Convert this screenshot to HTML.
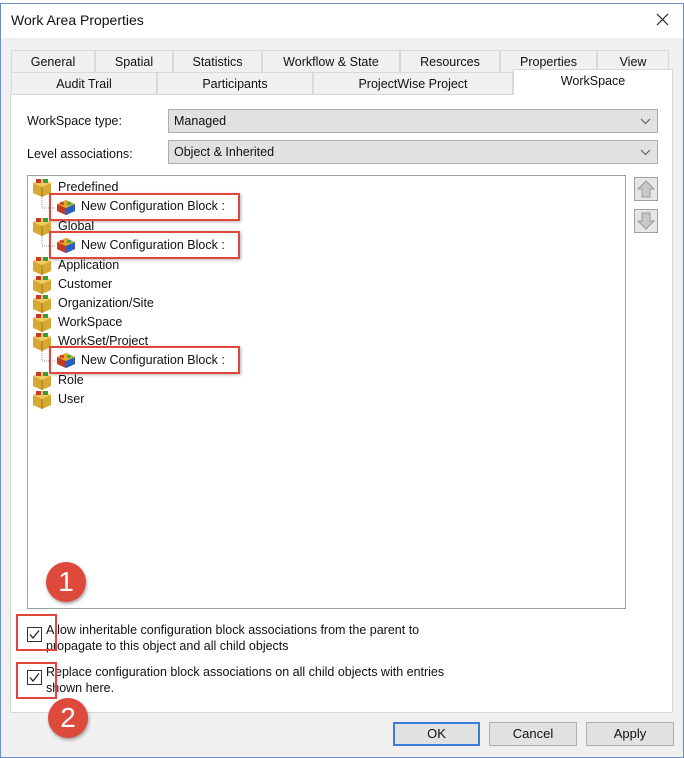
<!DOCTYPE html>
<html><head><style>
*{margin:0;padding:0;box-sizing:border-box}
body{width:684px;height:758px;background:#fff;font-family:"Liberation Sans",sans-serif;font-size:12.5px;color:#111;position:relative;overflow:hidden}
.a{position:absolute}
.dlg{left:0;top:3px;width:684px;height:755px;border:1px solid #6a8fc8;background:#f0f0f0}
.title{left:1px;top:4px;width:682px;height:34px;background:#fff}
.tab{position:absolute;height:22px;border:1px solid #d9d9d9;border-bottom:none;background:#f0f0f0;text-align:center;line-height:22px;font-size:12.5px}
.panel{left:10px;top:94px;width:663px;height:619px;background:#fff;border:1px solid #d9d9d9}
.sel{position:absolute;left:168px;width:490px;height:24px;background:#e1e1e1;border:1px solid #adadad;padding-left:5px;line-height:22px}
.sel svg{position:absolute;right:6px;top:8px}
.tree{left:27px;top:175px;width:599px;height:434px;border:1px solid #a0a0a0;background:#fff}
.row{position:absolute;height:19px;line-height:19px;white-space:nowrap}
.red{position:absolute;border:2px solid #e0463a;box-shadow:1px 1px 3px rgba(0,0,0,.3)}
.btn{position:absolute;top:722px;height:24px;background:#e1e1e1;border:1px solid #adadad;text-align:center;line-height:22px;font-size:13px}
.arrow{position:absolute;left:634px;width:24px;height:24px;border:1px solid #a0a0a0;background:#e6e6e6}
.cb{position:absolute;left:27px;width:15px;height:15px;border:1px solid #333;background:#fff}
.circ{position:absolute;width:40px;height:40px;border-radius:50%;background:#dd4a3b;color:#fff;font-size:28px;text-align:center;line-height:40px;box-shadow:1px 2px 3px rgba(0,0,0,.35)}
</style></head><body>
<div class="a" style="left:210px;top:0;width:300px;height:4px;background:#fff"></div>
<div class="a dlg"></div>
<div class="a title"></div>
<div class="a" style="left:11px;top:12px;font-size:14px">Work Area Properties</div>
<svg class="a" style="left:656px;top:13px" width="13" height="13"><path d="M1 1L12 12M12 1L1 12" stroke="#222" stroke-width="1.2"/></svg>

<div class="tab" style="left:11px;top:50px;width:84px">General</div>
<div class="tab" style="left:95px;top:50px;width:78px">Spatial</div>
<div class="tab" style="left:173px;top:50px;width:89px">Statistics</div>
<div class="tab" style="left:262px;top:50px;width:138px">Workflow &amp; State</div>
<div class="tab" style="left:400px;top:50px;width:100px">Resources</div>
<div class="tab" style="left:500px;top:50px;width:97px">Properties</div>
<div class="tab" style="left:597px;top:50px;width:72px">View</div>
<div class="tab" style="left:11px;top:72px;width:146px">Audit Trail</div>
<div class="tab" style="left:157px;top:72px;width:156px">Participants</div>
<div class="tab" style="left:313px;top:72px;width:200px">ProjectWise Project</div>
<div class="a panel"></div>
<div class="tab" style="left:513px;top:69px;width:160px;height:26px;background:#fff;line-height:22px;z-index:2">WorkSpace</div>

<div class="a" style="left:27px;top:114px">WorkSpace type:</div>
<div class="sel" style="top:109px">Managed<svg width="11" height="7"><path d="M1 1L5.5 5.5L10 1" stroke="#555" fill="none"/></svg></div>
<div class="a" style="left:27px;top:147px">Level associations:</div>
<div class="sel" style="top:140px">Object &amp; Inherited<svg width="11" height="7"><path d="M1 1L5.5 5.5L10 1" stroke="#555" fill="none"/></svg></div>

<div class="a tree"></div>
<svg class="a" style="left:0;top:0" width="260" height="410">
<defs>
<g id="box"><path d="M0 5L9 1L18 5L18 15L9 19L0 15Z" fill="#d7a833"/><path d="M0 5L9 9L18 5L9 1Z" fill="#f0cc60"/><path d="M9 9L9 19" stroke="#a27418"/><rect x="3" y="1" width="5" height="4" fill="#c73a2a"/><rect x="10" y="1" width="5" height="4" fill="#3a9b3a"/></g>
<g id="blk"><path d="M1 7L10 3L19 7L19 14L10 18L1 14Z" fill="#2f8e2f"/><path d="M1 7L10 11L10 18L1 14Z" fill="#c43a24"/><path d="M10 11L19 7L19 14L10 18Z" fill="#2a5fbf"/><path d="M1 7L10 3L19 7L10 11Z" fill="#e2ab2a"/><rect x="4" y="5" width="4" height="3" fill="#d04a2c"/><rect x="11" y="5" width="4" height="3" fill="#4aa84a"/></g>
</defs>
<g stroke="#999" stroke-dasharray="1 1" fill="none"><path d="M42 198V208H55"/><path d="M42 236V246H55"/><path d="M42 351V361H55"/></g>
<use href="#box" x="33" y="178"/><use href="#box" x="33" y="217"/><use href="#box" x="33" y="256"/><use href="#box" x="33" y="275"/><use href="#box" x="33" y="294"/><use href="#box" x="33" y="313"/><use href="#box" x="33" y="332"/><use href="#box" x="33" y="371"/><use href="#box" x="33" y="390"/>
<use href="#blk" x="56" y="197"/><use href="#blk" x="56" y="235"/><use href="#blk" x="56" y="350"/>
</svg>
<div class="row a" style="left:58px;top:178px">Predefined</div>
<div class="row a" style="left:81px;top:197px">New Configuration Block :</div>
<div class="row a" style="left:58px;top:217px">Global</div>
<div class="row a" style="left:81px;top:236px">New Configuration Block :</div>
<div class="row a" style="left:58px;top:256px">Application</div>
<div class="row a" style="left:58px;top:275px">Customer</div>
<div class="row a" style="left:58px;top:294px">Organization/Site</div>
<div class="row a" style="left:58px;top:313px">WorkSpace</div>
<div class="row a" style="left:58px;top:332px">WorkSet/Project</div>
<div class="row a" style="left:81px;top:351px">New Configuration Block :</div>
<div class="row a" style="left:58px;top:371px">Role</div>
<div class="row a" style="left:58px;top:390px">User</div>
<div class="red" style="left:49px;top:193px;width:191px;height:28px"></div>
<div class="red" style="left:49px;top:231px;width:191px;height:28px"></div>
<div class="red" style="left:49px;top:346px;width:191px;height:28px"></div>

<div class="arrow" style="top:177px"><svg width="22" height="22"><path d="M11 3L19 11H15V19H7V11H3Z" fill="#c9c9c9" stroke="#999"/></svg></div>
<div class="arrow" style="top:209px"><svg width="22" height="22"><path d="M11 19L19 11H15V3H7V11H3Z" fill="#c9c9c9" stroke="#999"/></svg></div>

<div class="cb" style="top:627px"><svg width="13" height="13"><path d="M2 6.5L5 10L11 2.5" stroke="#222" stroke-width="1.3" fill="none"/></svg></div>
<div class="cb" style="top:670px"><svg width="13" height="13"><path d="M2 6.5L5 10L11 2.5" stroke="#222" stroke-width="1.3" fill="none"/></svg></div>
<div class="a" style="left:46px;top:622px;line-height:16px">Allow inheritable configuration block associations from the parent to<br>propagate to this object and all child objects</div>
<div class="a" style="left:46px;top:664px;line-height:16px">Replace configuration block associations on all child objects with entries<br>shown here.</div>
<div class="red" style="left:16px;top:614px;width:41px;height:37px;box-shadow:none"></div>
<div class="red" style="left:16px;top:662px;width:41px;height:37px;box-shadow:none"></div>
<div class="circ" style="left:46px;top:562px">1</div>
<div class="circ" style="left:48px;top:698px">2</div>

<div class="btn" style="left:393px;width:87px;border:2px solid #3d7bd6;line-height:20px">OK</div>
<div class="btn" style="left:489px;width:88px">Cancel</div>
<div class="btn" style="left:586px;width:88px">Apply</div>
</body></html>
